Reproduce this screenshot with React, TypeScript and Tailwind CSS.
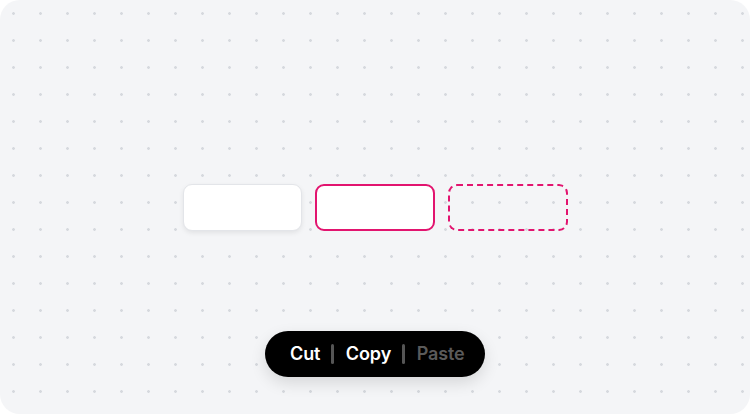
import React from "react";

export default function App() {
  return (
    <div className="w-[750px] h-[414px] bg-white" style={{ fontFamily: "Inter, 'Liberation Sans', sans-serif" }}>
      <div className="relative w-full h-full rounded-[20px] bg-[#f4f5f7] bg-[radial-gradient(circle,#d6d9de_1.1px,transparent_1.6px)] bg-[length:27px_27px] flex flex-col items-center">
        <div className="flex-1 flex items-center justify-center gap-[13px] pt-[1px]">
          <div className="w-[119px] h-[47px] rounded-[9px] bg-white border border-[#e3e5e9] shadow-[0_2px_5px_rgba(0,0,0,0.08)]" />
          <div className="w-[120px] h-[47px] rounded-[9px] bg-white border-[2.5px] border-[#e2146f]" />
          <div className="w-[120px] h-[47px] rounded-[9px] border-[2.5px] border-dashed border-[#e2146f]" />
        </div>
        <div className="absolute left-[265px] top-[331px] w-[220px] h-[46px] rounded-full bg-black shadow-[0_6px_16px_rgba(0,0,0,0.12)] flex items-center pl-[25px] text-[18px] font-semibold leading-none tracking-[-0.1px]">
          <span className="text-white">Cut</span>
          <span className="ml-[11px] mr-[12px] w-[2.5px] h-[20px] bg-[#555555] rounded-full" />
          <span className="text-white">Copy</span>
          <span className="ml-[11px] mr-[12px] w-[2.5px] h-[20px] bg-[#555555] rounded-full" />
          <span className="text-[#5a5a5a]">Paste</span>
        </div>
      </div>
    </div>
  );
}
